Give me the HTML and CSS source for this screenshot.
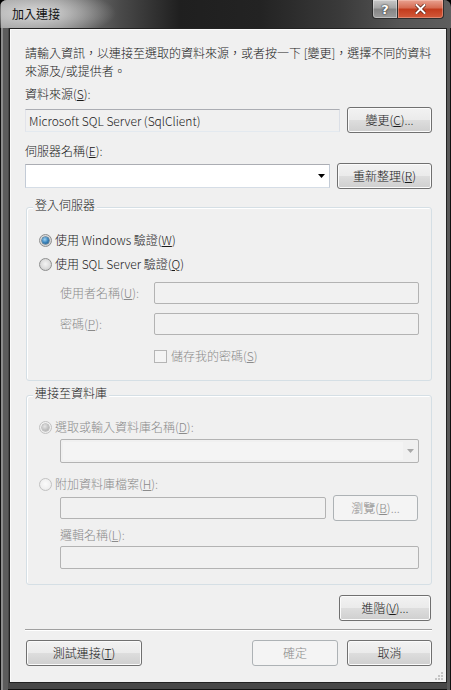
FILE: index.html
```html
<!DOCTYPE html>
<html lang="zh-Hant">
<head>
  <meta charset="UTF-8">
  <title>加入連接</title>
  <link rel="stylesheet" href="styles.css">
</head>
<body>
  <div class="window">
    <div class="titlebar">
      <span class="title">加入連接</span>
      <div class="caption">
        <span class="cap-btn cap-help">?</span>
        <span class="cap-btn cap-close">
          <svg width="11" height="10" viewBox="0 0 11 10">
            <path d="M1.5 1 L9.5 9 M9.5 1 L1.5 9" stroke="#5a1a0c" stroke-width="3.4" stroke-linecap="square"/>
            <path d="M1.5 1 L9.5 9 M9.5 1 L1.5 9" stroke="#fff" stroke-width="2" stroke-linecap="square"/>
          </svg>
        </span>
      </div>
    </div>

    <div class="client">
      <p class="intro">請輸入資訊，以連接至選取的資料來源，或者按一下 [變更]，選擇不同的資料<br>來源及/或提供者。</p>

      <div class="label lbl-source">資料來源(<u>S</u>):</div>
      <div class="row row-source">
        <div class="textbox readonly">Microsoft SQL Server (SqlClient)</div>
        <button class="btn w85">變更(<u>C</u>)...</button>
      </div>

      <div class="label lbl-server">伺服器名稱(<u>E</u>):</div>
      <div class="row row-server">
        <div class="combo">
          <svg width="7" height="4" viewBox="0 0 7 4"><path d="M0 0 H7 L3.5 4 Z" fill="#000"/></svg>
        </div>
        <button class="btn w95">重新整理(<u>R</u>)</button>
      </div>

      <div class="group group-login">
        <div class="group-title">登入伺服器</div>
        <div class="opt opt-win"><span class="radio checked"></span>使用 Windows 驗證(<u>W</u>)</div>
        <div class="opt opt-sql"><span class="radio"></span>使用 SQL Server 驗證(<u>Q</u>)</div>
        <div class="field field-user">
          <span class="flabel">使用者名稱(<u>U</u>):</span>
          <div class="input"></div>
        </div>
        <div class="field field-pass">
          <span class="flabel">密碼(<u>P</u>):</span>
          <div class="input"></div>
        </div>
        <div class="save-row"><span class="checkbox"></span><span class="dim">儲存我的密碼(<u>S</u>)</span></div>
      </div>

      <div class="group group-db">
        <div class="group-title">連接至資料庫</div>
        <div class="opt opt-db1 dim"><span class="radio checked off"></span>選取或輸入資料庫名稱(<u>D</u>):</div>
        <div class="dbcombo">
          <div class="dbcombo-edit"></div>
          <svg width="7" height="4" viewBox="0 0 7 4"><path d="M0 0 H7 L3.5 4 Z" fill="#a8a8a8"/></svg>
        </div>
        <div class="opt opt-db2 dim"><span class="radio off"></span>附加資料庫檔案(<u>H</u>):</div>
        <div class="file-row">
          <div class="input"></div>
          <button class="btn w85" disabled>瀏覽(<u>B</u>)...</button>
        </div>
        <div class="label lbl-logical dim">邏輯名稱(<u>L</u>):</div>
        <div class="input logical-input"></div>
      </div>

      <div class="adv-row">
        <button class="btn w92">進階(<u>V</u>)...</button>
      </div>

      <div class="sep"></div>

      <div class="footer">
        <button class="btn w116">測試連接(<u>T</u>)</button>
        <button class="btn w86 ok" disabled>確定</button>
        <button class="btn w85">取消</button>
      </div>

      <svg class="grip" width="10" height="10" viewBox="0 0 10 10">
        <rect x="7" y="1" width="2" height="2" fill="#c4c4c4"/>
        <rect x="4" y="4" width="2" height="2" fill="#c4c4c4"/>
        <rect x="7" y="4" width="2" height="2" fill="#c4c4c4"/>
        <rect x="1" y="7" width="2" height="2" fill="#c4c4c4"/>
        <rect x="4" y="7" width="2" height="2" fill="#c4c4c4"/>
        <rect x="7" y="7" width="2" height="2" fill="#c4c4c4"/>
      </svg>
    </div>
  </div>
</body>
</html>
```

FILE: styles.css
```css
body {
  margin: 0;
  background: #000;
  font-family: "Noto Sans CJK TC", sans-serif;
  font-size: 12px;
  font-weight: 300;
  color: #1a1a1a;
  overflow: hidden;
}

.window {
  width: 451px;
  height: 690px;
  display: flex;
  flex-direction: column;
  border-radius: 7px 7px 0 0;
  overflow: hidden;
  background:
    linear-gradient(to right, #111 0 1px, #8c8c8c 1px 3px, #5c5c5c 3px 8px, transparent 8px),
    linear-gradient(to left, #111 0 1px, #575757 1px 4px, transparent 4px),
    linear-gradient(to top, #111 0 1px, transparent 1px),
    #474747;
}

.titlebar {
  height: 28px;
  display: flex;
  align-items: flex-start;
  flex-shrink: 0;
  background:
    radial-gradient(ellipse 80px 24px at 36px 13px, rgba(222,222,222,0.95), rgba(200,200,200,0) 100%),
    linear-gradient(to right, #111 0 1px, transparent 1px),
    linear-gradient(to right, #9a9a9a 0, #868686 60px, #4a4a4a 120px, #1f1f1f 180px, #232323 260px, #3a3a3a 340px, #555 400px, #5e5e5e 451px);
}

.title {
  margin: 5px 0 0 12px;
  line-height: 18px;
  font-weight: 400;
  color: #111;
}

.caption {
  margin-left: auto;
  margin-right: 7px;
  display: flex;
}

.cap-btn {
  height: 19px;
  box-sizing: border-box;
  border: 1px solid #2e2e2e;
  border-top: none;
  display: flex;
  align-items: center;
  justify-content: center;
}

.cap-help {
  width: 26px;
  border-radius: 0 0 0 4px;
  background: linear-gradient(#c8c8c8, #a4a4a4 45%, #858585 50%, #9c9c9c);
  box-shadow: inset 0 0 0 1px rgba(255,255,255,0.35);
  color: #fff;
  font: bold 13px "DejaVu Sans", sans-serif;
  text-shadow: 0 0 2px #333, 0 0 1px #222;
}

.cap-close {
  width: 46px;
  border-left: none;
  border-radius: 0 0 4px 0;
  background: linear-gradient(#e9a190, #d56a50 45%, #c23a1c 50%, #d35a3a);
  box-shadow: inset 0 0 0 1px rgba(255,220,210,0.35);
}

.client {
  flex: 1;
  position: relative;
  margin: 0 4px 7px 9px;
  padding: 15px 14px 16px 15px;
  border: 1px solid #222;
  background: #f0f0f0;
  box-shadow: inset 1px 1px #fbfbfb;
  display: flex;
  flex-direction: column;
}

.intro {
  margin: 0;
  line-height: 18px;
  white-space: nowrap;
}

.label {
  line-height: 18px;
}

.dim,
.flabel {
  color: #8b8b8b;
}

u {
  text-underline-offset: 1px;
}

.lbl-source { margin-top: 5px; }
.lbl-server { margin-top: 9px; }

.row {
  display: flex;
  align-items: center;
  gap: 7px;
}

.row-source { margin-top: 4px; }
.row-server { margin-top: 3px; }

.textbox {
  flex: 1;
  height: 23px;
  box-sizing: border-box;
  border: 1px solid;
  border-color: #abadb3 #dbdfe6 #e3e9ef #e2e3ea;
  padding-left: 3px;
  line-height: 21px;
  white-space: nowrap;
}

.readonly {
  background: #f0f0f0;
}

.combo {
  flex: 1;
  height: 24px;
  box-sizing: border-box;
  border: 1px solid;
  border-color: #abadb3 #c3cbd6 #d5dde6 #c3cbd6;
  background: #fff;
  display: flex;
  align-items: center;
  justify-content: flex-end;
  padding-right: 4px;
}

.btn {
  height: 26px;
  box-sizing: border-box;
  padding: 0;
  border: 1px solid #707070;
  border-radius: 3px;
  background: linear-gradient(#f2f2f2, #ebebeb 48%, #dddddd 52%, #cfcfcf);
  box-shadow: inset 0 0 0 1px #fbfbfb;
  font: inherit;
  line-height: 22px;
  color: #1a1a1a;
}

.btn:disabled {
  border-color: #adb2b5;
  background: #f4f4f4;
  box-shadow: none;
  color: #8b8b8b;
}

.w85 { width: 85px; }
.w86 { width: 86px; }
.w92 { width: 92px; }
.w95 { width: 95px; }
.w116 { width: 116px; }

.group {
  margin-left: 1px;
  padding: 0 12px 15px 12px;
  border: 1px solid #d5dfe5;
  border-radius: 3px;
  box-shadow: inset 1px 1px #fff;
  display: flex;
  flex-direction: column;
}

.group-login { margin-top: 18px; }
.group-db { margin-top: 14px; }

.group-title {
  align-self: flex-start;
  margin: -12px 0 0 -6px;
  padding: 0 2px;
  background: #f0f0f0;
  line-height: 18px;
}

.opt {
  display: flex;
  align-items: center;
  line-height: 18px;
}

.opt-win { margin-top: 17px; }
.opt-sql { margin-top: 6px; }
.opt-db1 { margin-top: 16px; }
.opt-db2 { margin-top: 12px; }

.radio {
  width: 13px;
  height: 13px;
  box-sizing: border-box;
  margin-right: 3px;
  border: 1px solid #8e8f8f;
  border-radius: 50%;
  background: radial-gradient(circle at 50% 45%, #f4f4f4 0, #dedede 50%, #c4c4c4 100%);
  display: flex;
  align-items: center;
  justify-content: center;
}

.radio.checked::after {
  content: "";
  width: 7px;
  height: 7px;
  border-radius: 50%;
  background: radial-gradient(circle at 40% 35%, #9fd3f3 0, #3b85bd 50%, #1a4d76 100%);
  box-shadow: 0 0 0 0.5px #1b4a6e;
}

.radio.off {
  border-color: #c2c2c2;
  background: radial-gradient(circle at 50% 45%, #fbfbfb 0, #f0f0f0 60%, #e2e2e2 100%);
}

.radio.checked.off::after {
  background: radial-gradient(circle at 40% 35%, #e6e6e6 0, #bdbdbd 60%, #a3a3a3 100%);
  box-shadow: 0 0 0 0.5px #9a9a9a;
}

.field {
  display: flex;
  align-items: center;
  margin: 9px 0 0 21px;
}

.flabel {
  width: 94px;
  line-height: 18px;
  white-space: nowrap;
}

.input {
  flex: 1;
  height: 22px;
  box-sizing: border-box;
  border: 1px solid #b3b3b3;
  border-radius: 2px;
  background: #f1f1f1;
}

.save-row {
  margin: 12px 0 0 115px;
  display: flex;
  align-items: center;
  gap: 4px;
  line-height: 18px;
}

.checkbox {
  width: 13px;
  height: 13px;
  box-sizing: border-box;
  border: 1px solid #b5b5b5;
  background: #f4f4f4;
}

.dbcombo {
  margin: 3px 0 0 21px;
  height: 24px;
  box-sizing: border-box;
  border: 1px solid #b3b3b3;
  border-radius: 2px;
  background: #f0f0f0;
  display: flex;
  align-items: center;
  padding: 2px 4px 2px 2px;
  gap: 4px;
}

.dbcombo-edit {
  flex: 1;
  align-self: stretch;
  background: #f4f4f4;
}

.file-row {
  display: flex;
  align-items: center;
  gap: 7px;
  margin: 2px 1px 0 21px;
}

.lbl-logical { margin: 5px 0 0 21px; }

.logical-input {
  flex: none;
  height: 23px;
  margin: 2px 0 0 21px;
}

.adv-row {
  margin-top: 10px;
  padding-right: 1px;
  display: flex;
  justify-content: flex-end;
}

.sep {
  margin-top: 8px;
  border-top: 1px solid #a0a0a0;
  border-bottom: 1px solid #fff;
}

.footer {
  margin-top: 9px;
  display: flex;
  gap: 9px;
}

.footer .w116 { margin-left: 1px; }
.footer .ok { margin-left: auto; }

.grip {
  position: absolute;
  right: 2px;
  bottom: 1px;
}
```
